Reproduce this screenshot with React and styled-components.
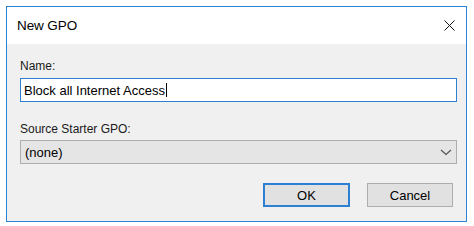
import React from "react";
import styled, { createGlobalStyle } from "styled-components";

const Global = createGlobalStyle`
  html, body { margin: 0; padding: 0; background: #ffffff; }
  body { font-family: "Liberation Sans", Arial, sans-serif; color: #000; }
`;

const Page = styled.div`
  padding: 6px 0 0 6px;
`;

const Window = styled.div`
  box-sizing: border-box;
  width: 461px;
  height: 216px;
  border: 1px solid #2b83d6;
  display: flex;
  flex-direction: column;
  background: #f0f0f0;
`;

const TitleBar = styled.div`
  height: 36px;
  background: #ffffff;
  display: flex;
  align-items: center;
  justify-content: space-between;
  padding: 0 11px 1px 10px;
`;

const Title = styled.span`
  font-size: 13.5px;
  letter-spacing: -0.1px;
  color: #000;
`;

const Close = styled.svg`
  width: 11px;
  height: 11px;
  display: block;
`;

const Body = styled.div`
  flex: 1;
  padding: 15px 9px 0 13px;
  display: flex;
  flex-direction: column;
`;

const Label = styled.div`
  font-size: 12px;
  line-height: 14px;
  color: #1a1a1a;
  margin-top: ${(p) => p.$top || 0}px;
`;

const TextBox = styled.div`
  box-sizing: border-box;
  height: 24px;
  margin-top: 5px;
  border: 1px solid #2f80d1;
  background: #ffffff;
  display: flex;
  align-items: center;
  padding-left: 3px;
  font-size: 13px;
  color: #000;
`;

const Caret = styled.span`
  display: inline-block;
  width: 1px;
  height: 14px;
  background: #000;
  margin-left: 1px;
`;

const Combo = styled.div`
  box-sizing: border-box;
  height: 24px;
  margin-top: 4px;
  border: 1px solid #adadad;
  background: #e5e5e5;
  display: flex;
  align-items: center;
  justify-content: space-between;
  padding: 0 4px 0 4px;
  font-size: 13px;
  color: #000;
`;

const Chevron = styled.svg`
  width: 12px;
  height: 7px;
  display: block;
`;

const Buttons = styled.div`
  display: flex;
  justify-content: flex-end;
  gap: 17px;
  margin-top: 19px;
  padding-right: 4px;
`;

const Button = styled.div`
  box-sizing: border-box;
  width: ${(p) => (p.$default ? 87 : 86)}px;
  height: 24px;
  background: #e1e1e1;
  border: ${(p) => (p.$default ? "2px solid #2d7fd2" : "1px solid #adadad")};
  display: flex;
  align-items: center;
  justify-content: center;
  font-size: 13px;
  color: #000;
`;

export default function App() {
  return (
    <>
      <Global />
      <Page>
        <Window>
          <TitleBar>
            <Title>New GPO</Title>
            <Close viewBox="0 0 11 11">
              <path d="M0.5 0.5 L10.5 10.5 M10.5 0.5 L0.5 10.5" stroke="#111" strokeWidth="1" fill="none" />
            </Close>
          </TitleBar>
          <Body>
            <Label>Name:</Label>
            <TextBox>
              Block all Internet Access
              <Caret />
            </TextBox>
            <Label $top={20}>Source Starter GPO:</Label>
            <Combo>
              <span>(none)</span>
              <Chevron viewBox="0 0 12 7">
                <path d="M1 1 L6 5.5 L11 1" stroke="#555" strokeWidth="1.2" fill="none" />
              </Chevron>
            </Combo>
            <Buttons>
              <Button $default>OK</Button>
              <Button>Cancel</Button>
            </Buttons>
          </Body>
        </Window>
      </Page>
    </>
  );
}
